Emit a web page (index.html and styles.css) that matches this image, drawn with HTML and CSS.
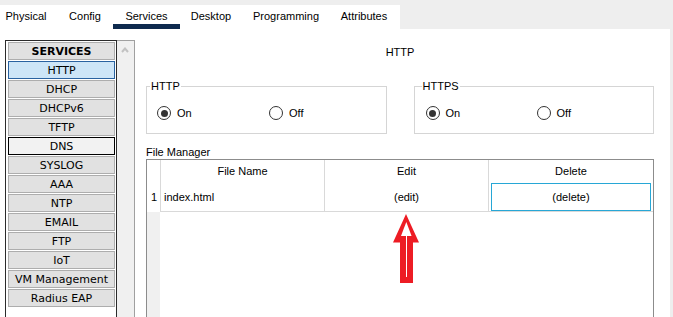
FILE: index.html
```html
<!DOCTYPE html>
<html lang="en">
<head>
  <meta charset="UTF-8" />
  <title>Server - Services</title>
  <link rel="stylesheet" href="styles.css">
</head>
<body>

<nav class="tabs">
  <div class="tab tab-physical">Physical</div>
  <div class="tab tab-config">Config</div>
  <div class="tab tab-services active">Services</div>
  <div class="tab tab-desktop">Desktop</div>
  <div class="tab tab-programming">Programming</div>
  <div class="tab tab-attributes">Attributes</div>
</nav>

<div class="window">
  <div class="services">
    <div class="svc-list">
      <div class="svc-btn svc-head">SERVICES</div>
      <div class="svc-btn selected">HTTP</div>
      <div class="svc-btn">DHCP</div>
      <div class="svc-btn">DHCPv6</div>
      <div class="svc-btn">TFTP</div>
      <div class="svc-btn focused">DNS</div>
      <div class="svc-btn">SYSLOG</div>
      <div class="svc-btn">AAA</div>
      <div class="svc-btn">NTP</div>
      <div class="svc-btn">EMAIL</div>
      <div class="svc-btn">FTP</div>
      <div class="svc-btn">IoT</div>
      <div class="svc-btn">VM Management</div>
      <div class="svc-btn">Radius EAP</div>
    </div>
    <div class="svc-scroll">
      <svg class="chevron" width="8" height="6" viewBox="0 0 8 6">
        <polyline points="1,5 4,1.5 7,5" fill="none" stroke="#c2c2c2" stroke-width="2" />
      </svg>
    </div>
  </div>

  <div class="panel">
    <div class="panel-title">HTTP</div>

    <div class="groups">
      <div class="group group-http">
        <span class="legend">HTTP</span>
        <label class="option"><span class="radio checked"></span>On</label>
        <label class="option"><span class="radio"></span>Off</label>
      </div>
      <div class="group group-https">
        <span class="legend">HTTPS</span>
        <label class="option"><span class="radio checked"></span>On</label>
        <label class="option"><span class="radio"></span>Off</label>
      </div>
    </div>

    <div class="fm-label">File Manager</div>

    <div class="fm">
      <div class="fm-cell fm-num"></div>
      <div class="fm-cell col">File Name</div>
      <div class="fm-cell col">Edit</div>
      <div class="fm-cell col">Delete</div>

      <div class="fm-cell fm-num row">1</div>
      <div class="fm-cell col row name">index.html</div>
      <div class="fm-cell col row">(edit)</div>
      <div class="fm-cell col row del"><span class="del-box">(delete)</span></div>

      <div class="fm-cell fm-num empty"></div>
      <div class="fm-cell fm-rest"></div>

      <svg class="arrow" width="26" height="70" viewBox="393 214 26 70">
        <polygon points="406,214 419,242.5 413,242.5 413,283 400,283 400,242.5 393,242.5" fill="#ed1c24" />
        <polygon points="406.3,222 411.6,236 401,236" fill="#fff" />
        <rect x="406" y="236" width="1" height="41" fill="#fff" />
      </svg>
    </div>
  </div>
</div>

</body>
</html>
```

FILE: styles.css
```css
body {
  margin: 0;
  background-color: #eeeeee;
  font-family: 'Liberation Sans', Arial, sans-serif;
  font-size: 11px;
  color: #000;
  height: 317px;
  overflow: hidden;
}
.tabs {
  margin-top: 5px;
  width: 400px;
  height: 24px;
  background-color: #fff;
  display: flex;
}
.tab {
  box-sizing: border-box;
  height: 24px;
  padding-top: 3px;
  line-height: 16px;
  text-align: center;
}
.tab-physical { width: 52px; }
.tab-config { width: 61px; padding-left: 5px; }
.tab-services { width: 67px; }
.tab-desktop { width: 62px; }
.tab-programming { width: 88px; }
.tab-attributes { width: 68px; }
.tab.active {
  border-bottom: 5px solid #0e2a4e;
}
.window {
  box-sizing: border-box;
  height: 288px;
  margin-right: 3px;
  background-color: #fff;
  padding: 11px 0 0 5px;
  display: flex;
  overflow: hidden;
}
.services {
  display: flex;
  height: 300px;
}
.svc-list {
  box-sizing: border-box;
  width: 112px;
  border: 1px solid #2b2b2b;
  padding: 1px 1px 0 2px;
  display: flex;
  flex-direction: column;
  gap: 1px;
}
.svc-btn {
  box-sizing: border-box;
  height: 18px;
  border: 1px solid #adadad;
  background-color: #e1e1e1;
  font-family: 'DejaVu Sans', Verdana, sans-serif;
  font-size: 11px;
  padding-top: 1px;
  line-height: 15px;
  text-align: center;
  white-space: nowrap;
}
.svc-head {
  font-weight: bold;
}
.svc-btn.selected {
  background-color: #cde5f7;
  border-color: #2a62a0;
}
.svc-btn.focused {
  background-color: #f2f2f2;
  border-color: #000;
}
.svc-scroll {
  box-sizing: border-box;
  width: 18px;
  background-color: #f0f0f0;
  border-top: 1px solid #a0a0a0;
  border-right: 1px solid #a0a0a0;
  padding: 6px 0 0 4px;
}
.chevron {
  display: block;
}
.panel {
  flex: 1;
  padding: 0 16px 0 11px;
}
.panel-title {
  line-height: 24px;
  text-align: center;
}
.groups {
  margin-top: 22px;
  display: grid;
  grid-template-columns: 1fr 1fr;
  gap: 27px;
}
.group {
  position: relative;
  box-sizing: border-box;
  height: 48px;
  border: 1px solid #d5d5d5;
  padding: 19px 0 0 10px;
  display: flex;
}
.group-https {
  padding-left: 11px;
}
.legend {
  position: absolute;
  top: -8px;
  left: 3px;
  padding: 0 1px;
  background-color: #fff;
  line-height: 14px;
}
.group-https .legend {
  left: 7px;
}
.option {
  display: flex;
  align-items: center;
  gap: 6px;
  width: 112px;
  height: 14px;
  line-height: 14px;
}
.group-https .option {
  width: 111px;
}
.radio {
  box-sizing: border-box;
  width: 14px;
  height: 14px;
  border: 1px solid #333;
  border-radius: 50%;
  display: flex;
  align-items: center;
  justify-content: center;
}
.radio.checked::after {
  content: '';
  width: 7px;
  height: 7px;
  border-radius: 50%;
  background-color: #333;
}
.fm-label {
  margin-top: 11px;
  line-height: 14px;
}
.fm {
  position: relative;
  height: 200px;
  border: 1px solid #8c8c8c;
  border-bottom: none;
  display: grid;
  grid-template-columns: 13px 164px 164px 1fr;
  grid-template-rows: 23px 29px 1fr;
}
.fm-cell {
  box-sizing: border-box;
  text-align: center;
  line-height: 23px;
}
.fm-cell.col {
  border-left: 1px solid #d9d9d9;
}
.fm-cell.row {
  line-height: 28px;
}
.fm-cell.col.row {
  border-bottom: 1px solid #d9d9d9;
}
.fm-cell.name {
  text-align: left;
  padding-left: 3px;
}
.fm-cell.del {
  padding: 0 2px;
}
.del-box {
  display: block;
  height: 28px;
  box-sizing: border-box;
  border: 1px solid #27a7d6;
  line-height: 26px;
}
.fm-num {
  padding-left: 1px;
}
.fm-num.empty {
  background-color: #f0f0f0;
}
.fm-rest {
  grid-column: span 3;
}
.arrow {
  position: absolute;
  left: 246px;
  top: 54px;
}
```
